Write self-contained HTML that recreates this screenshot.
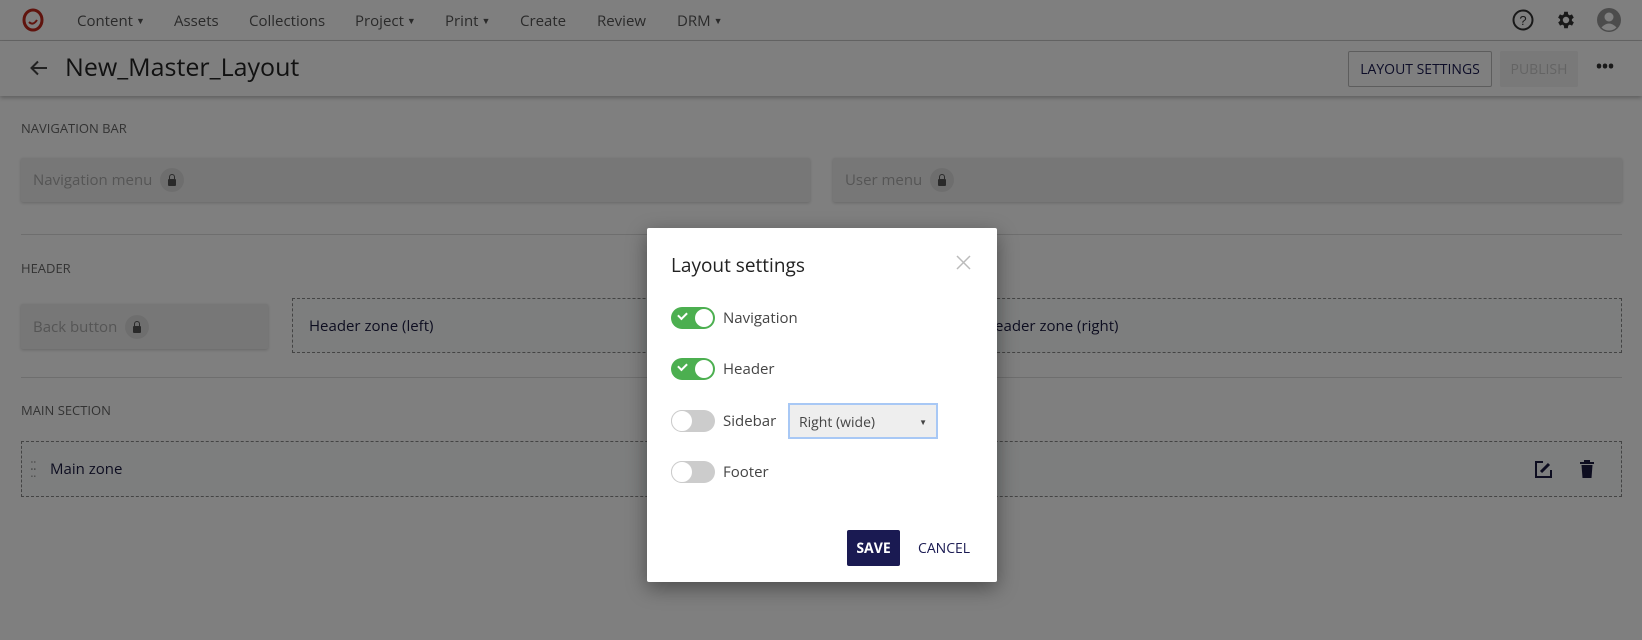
<!DOCTYPE html>
<html><head><meta charset="utf-8"><style>
*{box-sizing:border-box;margin:0;padding:0}
body{width:1642px;height:640px;overflow:hidden;background:#fff;font-family:"Open Sans","Liberation Sans",sans-serif;position:relative;color:#222}
.abs{position:absolute}
.nav{top:0;left:0;width:1642px;height:41px;background:#fff;border-bottom:1px solid #ccc}
.nav .it{position:absolute;top:11px;font-size:15px;color:#555}
.car{font-size:9px;vertical-align:2px;margin-left:3px}
.ph{top:41px;left:0;width:1642px;height:55px;background:#fff;box-shadow:0 2px 4px rgba(0,0,0,.25)}
.lbl{font-size:13px;color:#666;left:21px}
.box{background:#eee;border-radius:2px;box-shadow:0 1px 3px rgba(0,0,0,.2);font-size:15px;color:#aaa;padding-left:12px;display:flex;align-items:center}
.lock{display:inline-block;width:24px;height:24px;border-radius:50%;background:#ddd;margin-left:8px;position:relative}
.lock:before{content:"";position:absolute;left:8px;top:11px;width:8px;height:7px;background:#555;border-radius:1px}
.lock:after{content:"";position:absolute;left:9px;top:6px;width:4px;height:6px;border:1.5px solid #555;border-bottom:none;border-radius:3px 3px 0 0}
.dz{border:1px dashed #888;background:#fafcfc;font-size:15px;color:#1a1a40;display:flex;align-items:center;padding-left:16px}
.hr{left:21px;width:1601px;height:1px;background:#ddd}
.ov{top:0;left:0;width:1642px;height:640px;background:rgba(0,0,0,.5)}
.dlg{left:647px;top:228px;width:350px;height:354px;background:#fff;border-radius:2px;box-shadow:0 6px 20px rgba(0,0,0,.4)}
.tg{position:absolute;left:24px;width:44px;height:22px;border-radius:11px}
.tg.on{background:#4caf50}
.tg.on:after{content:"";position:absolute;right:2px;top:2px;width:18px;height:18px;border-radius:50%;background:#fff}
.tg.on:before{content:"";position:absolute;left:7px;top:5px;width:7px;height:4px;border-left:2px solid #fff;border-bottom:2px solid #fff;transform:rotate(-45deg)}
.tg.off{background:#ccc}
.tg.off:after{content:"";position:absolute;left:0;top:0;width:22px;height:22px;border-radius:50%;background:#fff;border:1px solid #ccc;box-sizing:border-box}
.tl{position:absolute;left:76px;font-size:15px;color:#444}
</style></head><body>
<div class="abs nav">
 <svg class="abs" style="left:22px;top:8px" width="22" height="24" viewBox="0 0 22 24"><ellipse cx="11" cy="12" rx="9" ry="10" fill="none" stroke="#c0281c" stroke-width="3"/><path d="M7 14 q4 4 8-2" stroke="#c0281c" stroke-width="2" fill="none"/></svg>
 <span class="it" style="left:77px">Content<span class="car">▼</span></span>
 <span class="it" style="left:174px">Assets</span>
 <span class="it" style="left:249px">Collections</span>
 <span class="it" style="left:355px">Project<span class="car">▼</span></span>
 <span class="it" style="left:445px">Print<span class="car">▼</span></span>
 <span class="it" style="left:520px">Create</span>
 <span class="it" style="left:597px">Review</span>
 <span class="it" style="left:677px">DRM<span class="car">▼</span></span>
 <svg class="abs" style="left:1512px;top:9px" width="22" height="22" viewBox="0 0 22 22"><circle cx="11" cy="11" r="9.5" fill="none" stroke="#333" stroke-width="2"/><text x="11" y="16" font-size="13" text-anchor="middle" font-family="Liberation Sans" fill="#333">?</text></svg>
 <svg class="abs" style="left:1555px;top:9px" width="22" height="22" viewBox="0 0 24 24"><path fill="#333" d="M19.4 13a7.5 7.5 0 0 0 0-2l2.1-1.6-2-3.5-2.5 1a7 7 0 0 0-1.7-1L15 3h-4l-.4 2.9a7 7 0 0 0-1.7 1l-2.5-1-2 3.5L6.6 11a7.5 7.5 0 0 0 0 2l-2.1 1.6 2 3.5 2.5-1a7 7 0 0 0 1.7 1L11 21h4l.4-2.9a7 7 0 0 0 1.7-1l2.5 1 2-3.5zM13 15.5a3.5 3.5 0 1 1 0-7 3.5 3.5 0 0 1 0 7z" transform="translate(-1 0)"/></svg>
 <svg class="abs" style="left:1597px;top:8px" width="24" height="24" viewBox="0 0 24 24"><circle cx="12" cy="12" r="12" fill="#999"/><circle cx="12" cy="9" r="4.5" fill="#fff"/><path d="M4.5 19.5q7.5-8 15 0a11 11 0 0 1-15 0z" fill="#fff"/></svg>
</div>
<div class="abs ph">
 <svg class="abs" style="left:30px;top:19px" width="18" height="16" viewBox="0 0 18 16"><path d="M17 8H2M8 1.5 1.5 8 8 14.5" stroke="#444" stroke-width="2" fill="none"/></svg>
 <div class="abs" style="left:65px;top:9px;font-size:25px;color:#222">New_Master_Layout</div>
 <div class="abs" style="left:1348px;top:10px;width:144px;height:36px;border:1px solid #bbb;border-radius:2px;font-size:14px;color:#1a1a50;display:flex;align-items:center;justify-content:center">LAYOUT SETTINGS</div>
 <div class="abs" style="left:1500px;top:10px;width:78px;height:36px;background:#f2f2f2;border-radius:2px;font-size:14px;color:#c8c8c8;display:flex;align-items:center;justify-content:center">PUBLISH</div>
 <div class="abs" style="left:1596px;top:14px;font-size:16px;color:#333;font-weight:bold">•••</div>
</div>
<div class="abs lbl" style="top:119px">NAVIGATION BAR</div>
<div class="abs box" style="left:21px;top:158px;width:789px;height:44px">Navigation menu<span class="lock"></span></div>
<div class="abs box" style="left:833px;top:158px;width:789px;height:44px">User menu<span class="lock"></span></div>
<div class="abs hr" style="top:234px"></div>
<div class="abs lbl" style="top:259px">HEADER</div>
<div class="abs box" style="left:21px;top:304px;width:247px;height:45px">Back button<span class="lock"></span></div>
<div class="abs dz" style="left:292px;top:298px;width:654px;height:55px">Header zone (left)</div>
<div class="abs dz" style="left:967px;top:298px;width:655px;height:55px">Header zone (right)</div>
<div class="abs hr" style="top:377px"></div>
<div class="abs lbl" style="top:401px">MAIN SECTION</div>
<div class="abs dz" style="left:21px;top:441px;width:1601px;height:56px;padding-left:8px"><span style="color:#999;font-size:12px;letter-spacing:-1px;line-height:7px;margin-right:10px;display:inline-block;width:10px">⁚⁚<br>⁚⁚</span>Main zone</div>
<svg class="abs" style="left:1533px;top:460px" width="20" height="20" viewBox="0 0 20 20"><path d="M10 2H3v15h15v-7" stroke="#1a1a40" stroke-width="2" fill="none"/><path d="M8 12l8-8" stroke="#1a1a40" stroke-width="3"/></svg>
<svg class="abs" style="left:1579px;top:459px" width="16" height="20" viewBox="0 0 16 20"><path d="M1 3h14v2H1zM5 1h6v2H5zM2.5 6h11l-1 13h-9z" fill="#1a1a40"/></svg>
<div class="abs ov"></div>
<div class="abs dlg">
 <div class="abs" style="left:24px;top:24px;font-size:19px;color:#222">Layout settings</div>
 <svg class="abs" style="left:309px;top:27px" width="15" height="15" viewBox="0 0 15 15"><path d="M1 1l13 13M14 1 1 14" stroke="#bbb" stroke-width="1.5"/></svg>
 <div class="tg on" style="top:79px"></div><div class="tl" style="top:80px">Navigation</div>
 <div class="tg on" style="top:130px"></div><div class="tl" style="top:131px">Header</div>
 <div class="tg off" style="top:182px"></div><div class="tl" style="top:183px">Sidebar</div>
 <div class="abs" style="left:141px;top:175px;width:150px;height:36px;background:#eee;border:2px solid #a8c8f5;font-size:14px;color:#444;padding:8px 0 0 9px">Right (wide)<span style="position:absolute;right:9px;top:12px;font-size:8px">▼</span></div>
 <div class="tg off" style="top:233px"></div><div class="tl" style="top:234px">Footer</div>
 <div class="abs" style="left:200px;top:302px;width:53px;height:36px;background:#1a1a52;border-radius:2px;color:#fff;font-weight:bold;font-size:14px;display:flex;align-items:center;justify-content:center">SAVE</div>
 <div class="abs" style="left:271px;top:311px;font-size:14px;color:#1a1a52">CANCEL</div>
</div>
</body></html>
